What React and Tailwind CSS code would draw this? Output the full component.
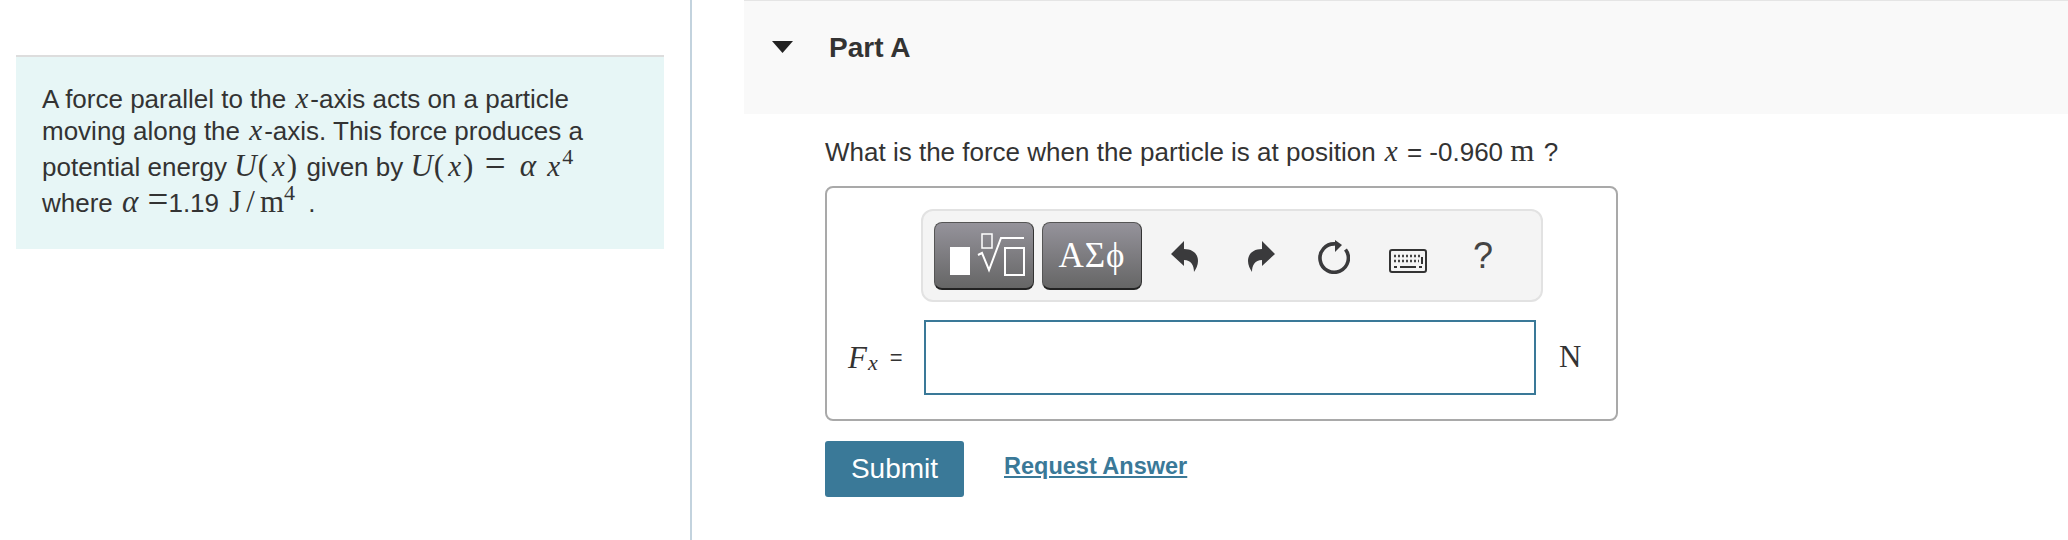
import React from "react";

const Mi = ({ children }) => <i className="font-['Liberation_Serif',serif] text-[31px] leading-none tracking-[1px]">{children}</i>;
const Mr = ({ children }) => <span className="font-['Liberation_Serif',serif] text-[31px] leading-none tracking-[2px]">{children}</span>;
const X = () => <i className="font-['Liberation_Serif',serif] text-[29px] leading-none mx-[2px]">x</i>;
const Alpha = ({ className }) => <i className={`font-['Liberation_Serif',serif] text-[31px] leading-none mx-[2px] ${className}`}>α</i>;
const Eq = ({ className }) => <span className={`font-['Liberation_Serif',serif] text-[37px] leading-none ${className}`}>=</span>;
const Sup = ({ children }) => (
  <sup className="font-['Liberation_Serif',serif] text-[22px] leading-none relative top-[-2px] align-super">{children}</sup>
);

const ToolButton = ({ children, className }) => (
  <div className={`h-[68px] w-[100px] rounded-[8px] border border-[#555] border-r-[#333] border-b-[2px] border-b-[#222] bg-gradient-to-b from-[#95939b] to-[#666666] flex items-center justify-center text-white ${className}`}>
    {children}
  </div>
);

const Toolbar = () => (
  <div className="ml-[94px] w-[622px] h-[93px] rounded-[12px] border-2 border-[#e2e2e2] bg-[#f4f4f4] flex items-center pl-[11px]">
    <ToolButton className="overflow-hidden">
      <svg width="99" height="66" viewBox="0 0 99 66" fill="none" stroke="white" strokeWidth="2" className="shrink-0">
        <rect x="15" y="25" width="20" height="28" fill="white" stroke="none" />
        <rect x="47" y="12" width="10" height="14" strokeWidth="1.5" />
        <path d="M43 33l4-2 7 17 12-32h23" />
        <rect x="70" y="26" width="19" height="27" />
      </svg>
    </ToolButton>
    <ToolButton className="ml-[8px]">
      <span className="font-['Liberation_Serif',serif] text-[35px] leading-none tracking-[1px]">ΑΣϕ</span>
    </ToolButton>
    <svg width="27" height="31" viewBox="0 0 27 31" fill="#3a3a3c" className="ml-[29px] mt-[2px]">
      <path d="M0 13 13 0v8c9 0 14 5 14 12 0 4-2 8-4 11 0-7-3-12-10-12v6z" />
    </svg>
    <svg width="27" height="31" viewBox="0 0 27 31" fill="#3a3a3c" className="ml-[50px] mt-[2px]">
      <path d="M27 13 14 0v8C5 8 0 13 0 20c0 4 2 8 4 11 0-7 3-12 10-12v6z" />
    </svg>
    <svg width="32" height="34" viewBox="0 0 32 34" fill="none" stroke="#3a3a3c" strokeWidth="3.6" className="ml-[43px] mt-[2px]">
      <path d="M27.5 9.5A14.2 14.2 0 1 1 17 3.9" />
      <path d="M17 0l7 5-7 7z" fill="#3a3a3c" stroke="none" />
    </svg>
    <svg width="38" height="24" viewBox="0 0 38 24" fill="none" className="ml-[39px] mt-[10px]">
      <rect x="1" y="1" width="36" height="22" rx="2" stroke="#333" strokeWidth="2" fill="#f4f4f4" />
      <path d="M5 7h27M5 12h25" stroke="#444" strokeWidth="2.5" strokeDasharray="2 2" />
      <path d="M5 18h3M11 18h16M30 18h3M33 8v7" stroke="#333" strokeWidth="2" />
    </svg>
    <div className="ml-[46px] w-[19px] text-center text-[36px] text-[#444] leading-none">?</div>
  </div>
);

export default function App() {
  return (
    <div className="flex w-[2068px] h-[540px] bg-white text-[#333] font-['Liberation_Sans',sans-serif] overflow-hidden">
      <div className="w-[692px] h-full shrink-0 border-r-2 border-[#c3d3de] pl-[16px] pr-[26px] pt-[55px]">
        <div className="h-[194px] border-t-2 border-[#dddddd] bg-[#e7f6f6] pl-[26px] pt-[26px] text-[26px]">
          <p className="leading-[32px] h-[32px]">A force parallel to the <X />-axis acts on a particle</p>
          <p className="leading-[32px] h-[33px]">moving along the <X />-axis. This force produces a</p>
          <p className="leading-[30px] h-[36px] mt-[-3px]">potential energy <Mi>U</Mi><Mr>(</Mr><X /><Mr>)</Mr> given by <Mi>U</Mi><Mr>(</Mr><X /><Mr>)</Mr> <Eq className="ml-[2px]" /> <Alpha className="ml-[7px]" /> <X /><Sup>4</Sup></p>
          <p className="leading-[34px]">where <Alpha /> <Eq />1.19 <span className="font-['Liberation_Serif',serif] text-[31px] leading-none tracking-[5px] ml-[3px]">J/</span><span className="font-['Liberation_Serif',serif] text-[31px] leading-none">m</span><Sup>4</Sup> <span className="ml-[6px]">.</span></p>
        </div>
      </div>

      <div className="flex-1 pl-[52px]">
        <div className="h-[114px] border-t border-[#e5e5e5] bg-[#f9f9f9] flex pl-[28px] pt-[35px]">
          <svg width="21" height="12" viewBox="0 0 21 12" className="mt-[5px]" fill="#222"><path d="M0 0h21L10.5 12z" /></svg>
          <h2 className="ml-[36px] text-[28px] leading-[24px] font-bold">Part A</h2>
        </div>
        <p className="ml-[81px] mt-[21px] h-[32px] text-[26px] leading-[32px]">
          What is the force when the particle is at position <X /> = -0.960 <Mr>m</Mr> ?
        </p>
        <div className="ml-[81px] mt-[19px] w-[793px] h-[235px] rounded-[8px] border-2 border-[#a9a9a9] pt-[21px]">
          <Toolbar />
          <div className="flex items-center mt-[18px]">
            <div className="w-[97px] pl-[21px] flex items-center">
              <Mi>F</Mi><i className="font-['Liberation_Serif',serif] text-[22px] mt-[10px] leading-none">x</i>
              <span className="ml-[12px] text-[22px]">=</span>
            </div>
            <input className="w-[612px] h-[75px] border-2 border-[#3a7998] bg-white" />
            <span className="ml-[23px] font-['Liberation_Serif',serif] text-[31px]">N</span>
          </div>
        </div>
        <div className="ml-[81px] mt-[20px] flex items-center">
          <button className="w-[139px] h-[56px] rounded-[3px] bg-[#3a7998] text-white text-[28px]">Submit</button>
          <a className="ml-[40px] mb-[5px] text-[23.5px] font-bold text-[#3a7998] underline">Request Answer</a>
        </div>
      </div>
    </div>
  );
}
